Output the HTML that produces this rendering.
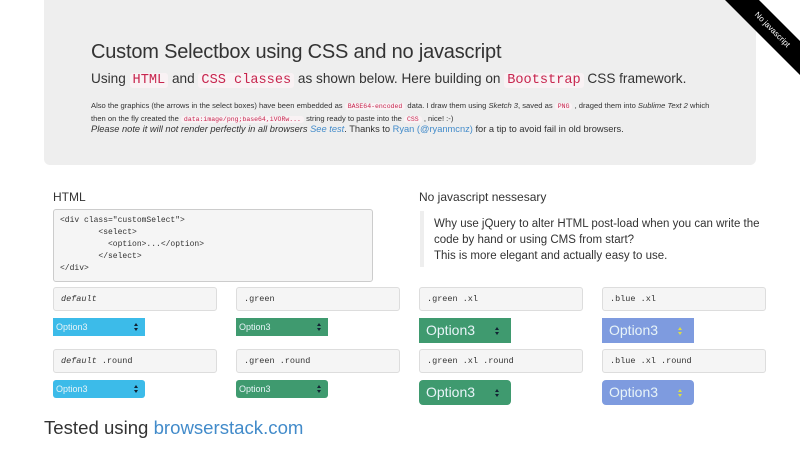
<!DOCTYPE html>
<html><head><meta charset="utf-8"><style>
*{margin:0;padding:0;box-sizing:border-box}
body{width:800px;height:450px;overflow:hidden;background:#fff;font-family:"Liberation Sans",sans-serif;color:#333;position:relative}
.a{position:absolute;white-space:nowrap}
.jum{position:absolute;left:44px;top:0;width:712px;height:165px;background:#eee;border-radius:0 0 6px 6px}
code{font-family:"Liberation Mono",monospace;color:#c7254e;background:#f9f2f4;padding:0 3px;border-radius:3px}
.box{position:absolute;width:164px;height:24px;background:#f5f5f5;border:1px solid #ddd;border-radius:3px;font-family:"Liberation Mono",monospace;font-size:8.5px;color:#333;padding:6px 7px}
.s{position:absolute;width:92px;height:18px;color:#e8f4f8;font-size:9px;padding:4px 3px}
.x{height:25px;font-size:14px;padding:4px 7px}
.ar{position:absolute;right:7px;top:50%;width:4px;height:8px;margin-top:-4px}
.x .ar{right:12px}
.ar:before,.ar:after{content:"";position:absolute;left:0;border-left:2px solid transparent;border-right:2px solid transparent}
.ar:before{top:0;border-bottom:3px solid #123}
.ar:after{bottom:0;border-top:3px solid #123}
.y:before{border-bottom-color:#dd4}.y:after{border-top-color:#dd4}
a{color:#428bca;text-decoration:none}
</style></head><body>
<div class="jum"></div>
<div class="a" style="left:682px;top:18px;width:180px;height:24px;background:#000;color:#fff;font-size:8px;text-align:center;line-height:24px;transform:rotate(45deg);transform-origin:50% 50%">No javascript</div>
<div class="a" style="left:91px;top:41px;font-size:20px;letter-spacing:-0.2px">Custom Selectbox using CSS and no javascript</div>
<div class="a" style="left:91px;top:71px;font-size:13.6px">Using <code>HTML</code> and <code>CSS classes</code> as shown below. Here building on <code>Bootstrap</code> CSS framework.</div>
<div class="a" style="left:91px;top:100px;font-size:7.6px;line-height:12px">Also the graphics (the arrows in the select boxes) have been embedded as <code style="font-size:6.5px">BASE64-encoded</code> data. I draw them using <i>Sketch 3</i>, saved as <code style="font-size:6.5px">PNG</code> , draged them into <i>Sublime Text 2</i> which<br>then on the fly created the <code style="font-size:6.5px">data:image/png;base64,iVORw...</code> string ready to paste into the <code style="font-size:6.5px">CSS</code> , nice! :-)</div>
<div class="a" style="left:91px;top:124px;font-size:9.3px"><i>Please note it will not render perfectly in all browsers <a href="#">See test</a></i>. Thanks to <a href="#">Ryan (@ryanmcnz)</a> for a tip to avoid fail in old browsers.</div>
<div class="a" style="left:53px;top:190px;font-size:12px">HTML</div>
<div class="a" style="left:53px;top:209px;width:320px;height:73px;background:#f5f5f5;border:1px solid #ccc;border-radius:3px;font-family:'Liberation Mono',monospace;font-size:8px;line-height:12px;padding:5px 6px;white-space:pre">&lt;div class="customSelect"&gt;
        &lt;select&gt;
          &lt;option&gt;...&lt;/option&gt;
        &lt;/select&gt;
&lt;/div&gt;</div>
<div class="a" style="left:419px;top:190px;font-size:12px">No javascript nessesary</div>
<div class="a" style="left:420px;top:211px;width:4px;height:56px;background:#eee"></div>
<div class="a" style="left:434px;top:216px;font-size:11.5px;line-height:16px">Why use jQuery to alter HTML post-load when you can write the<br>code by hand or using CMS from start?<br>This is more elegant and actually easy to use.</div>

<div class="box" style="left:53px;top:287px"><i>default</i></div>
<div class="box" style="left:236px;top:287px">.green</div>
<div class="box" style="left:419px;top:287px">.green .xl</div>
<div class="box" style="left:602px;top:287px">.blue .xl</div>
<div class="box" style="left:53px;top:349px"><i>default</i> .round</div>
<div class="box" style="left:236px;top:349px">.green .round</div>
<div class="box" style="left:419px;top:349px">.green .xl .round</div>
<div class="box" style="left:602px;top:349px">.blue .xl .round</div>

<div class="s" style="left:53px;top:318px;background:#3cbbe9">Option3<span class="ar"></span></div>
<div class="s" style="left:236px;top:318px;background:#3f9a6f">Option3<span class="ar"></span></div>
<div class="s x" style="left:419px;top:318px;background:#3f9a6f">Option3<span class="ar"></span></div>
<div class="s x" style="left:602px;top:318px;background:#7e9bdf">Option3<span class="ar y"></span></div>
<div class="s" style="left:53px;top:380px;background:#3cbbe9;border-radius:3px">Option3<span class="ar"></span></div>
<div class="s" style="left:236px;top:380px;background:#3f9a6f;border-radius:3px">Option3<span class="ar"></span></div>
<div class="s x" style="left:419px;top:380px;background:#3f9a6f;border-radius:4px">Option3<span class="ar"></span></div>
<div class="s x" style="left:602px;top:380px;background:#7e9bdf;border-radius:4px">Option3<span class="ar y"></span></div>

<div class="a" style="left:44px;top:417px;font-size:18.6px">Tested using <a href="#">browserstack.com</a></div>
</body></html>
